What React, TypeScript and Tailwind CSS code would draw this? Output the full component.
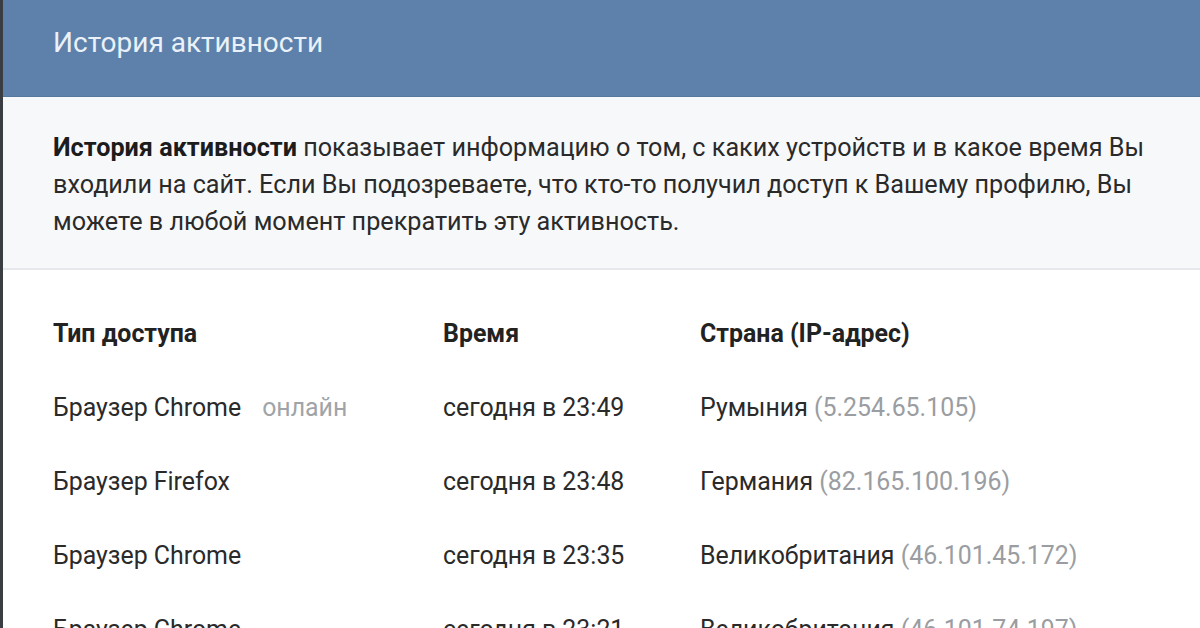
const sessions = [
  { device: "Браузер Chrome", online: true, time: "сегодня в 23:49", country: "Румыния", ip: "5.254.65.105" },
  { device: "Браузер Firefox", online: false, time: "сегодня в 23:48", country: "Германия", ip: "82.165.100.196" },
  { device: "Браузер Chrome", online: false, time: "сегодня в 23:35", country: "Великобритания", ip: "46.101.45.172" },
  { device: "Браузер Chrome", online: false, time: "сегодня в 23:21", country: "Великобритания", ip: "46.101.74.197" },
]

export default function App() {
  return (
    <div
      className="h-[628px] w-[1200px] overflow-hidden bg-white border-l-[3px] border-[#3a3d42]"
      style={{ fontFamily: "Roboto, 'Noto Sans', sans-serif" }}
    >
      <header className="h-[97px] bg-[#5d81ab] flex items-center pl-[50px] border-b border-[#56779e]">
        <h1 className="text-[28px] text-[#eaf1f8] -mt-[10px]">История активности</h1>
      </header>

      <section className="h-[173px] bg-[#f7f8fa] border-b-2 border-[#e7e8ec] pl-[50px] pt-[32px]">
        <p className="text-[25.2px] leading-[37px] text-[#2a2a2a] whitespace-nowrap">
          <b className="font-bold text-[#1c1c1c]">История активности</b> показывает информацию о том, с каких устройств и в какое время Вы
          <br />
          входили на сайт. Если Вы подозреваете, что кто-то получил доступ к Вашему профилю, Вы
          <br />
          можете в любой момент прекратить эту активность.
        </p>
      </section>

      <div className="pl-[50px] pt-[45px]">
        <div className="grid grid-cols-[390px_257px_1fr] h-[26px] items-center text-[24.9px] font-bold text-[#222]">
          <div>Тип доступа</div>
          <div>Время</div>
          <div>Страна (IP-адрес)</div>
        </div>

        <div className="mt-[48px] flex flex-col gap-[48px]">
          {sessions.map((s, i) => (
            <div
              key={i}
              className="grid grid-cols-[390px_257px_1fr] h-[26px] items-center text-[24.9px] text-[#2a2a2a] whitespace-nowrap"
            >
              <div>
                {s.device}
                {s.online && <span className="ml-[21px] text-[#a0a4a8]">онлайн</span>}
              </div>
              <div>{s.time}</div>
              <div>
                {s.country} <span className="text-[#9a9da1]">({s.ip})</span>
              </div>
            </div>
          ))}
        </div>
      </div>
    </div>
  )
}
